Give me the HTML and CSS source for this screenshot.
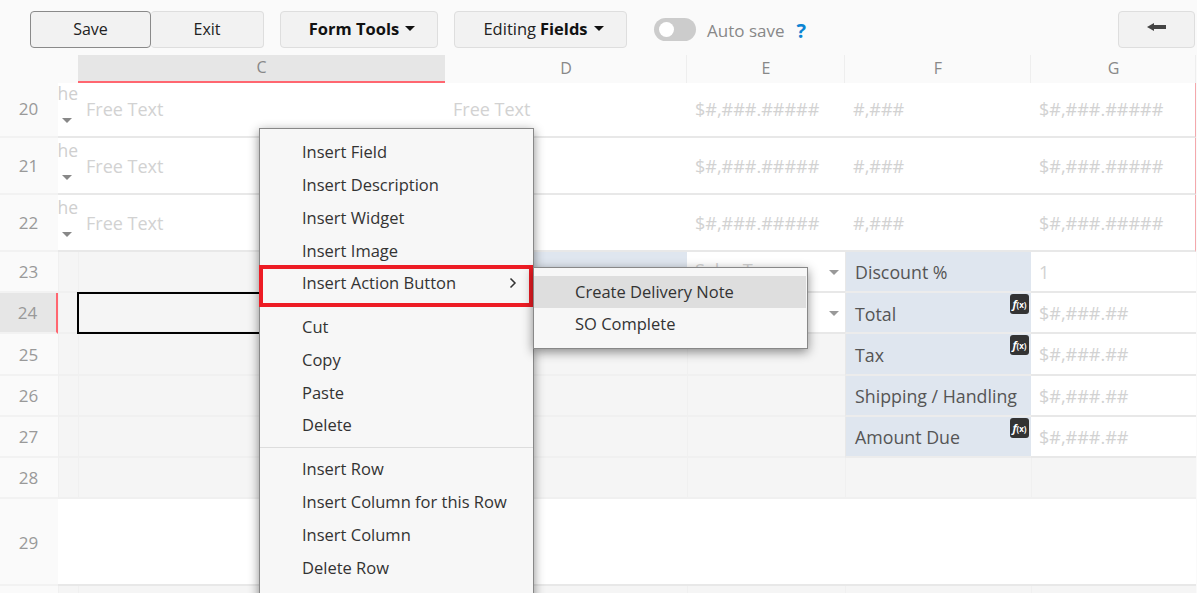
FILE: index.html
```html
<!DOCTYPE html>
<html lang="en">
<head>
<meta charset="utf-8">
<title>Form editor</title>
<link rel="stylesheet" href="styles.css">
</head>
<body>
<div class="page">
  <header class="toolbar">
    <div class="btn-group">
      <button class="btn btn-save">Save</button>
      <button class="btn btn-exit">Exit</button>
    </div>
    <button class="btn btn-tools"><b>Form Tools</b><span class="caret"></span></button>
    <button class="btn btn-edit">Editing <b>Fields</b><span class="caret"></span></button>
    <div class="autosave">
      <span class="toggle"><span class="knob"></span></span>
      <span class="auto-label">Auto save</span>
      <span class="help">?</span>
    </div>
    <button class="btn btn-back" aria-label="Back">
      <svg width="20" height="10" viewBox="0 0 20 10"><path d="M0 5 L7 1 V3 H19 V7 H7 V9 Z" fill="#444"/></svg>
    </button>
  </header>

  <main class="sheet">
    <div class="colhead corner"></div>
    <div class="colhead corner"></div>
    <div class="colhead col-active">C</div>
    <div class="colhead">D</div>
    <div class="colhead">E</div>
    <div class="colhead">F</div>
    <div class="colhead">G</div>

    <div class="rowhead row-first">20</div>
    <div class="cell clip"><span class="clip-text">he</span><span class="mini-caret"></span></div>
    <div class="cell ph row-first">Free Text</div>
    <div class="cell ph row-first">Free Text</div>
    <div class="cell ph row-first">$#,###.#####</div>
    <div class="cell ph row-first">#,###</div>
    <div class="cell ph edge row-first">$#,###.#####</div>

    <div class="rowhead">21</div>
    <div class="cell clip"><span class="clip-text">he</span><span class="mini-caret"></span></div>
    <div class="cell ph">Free Text</div>
    <div class="cell ph">Free Text</div>
    <div class="cell ph">$#,###.#####</div>
    <div class="cell ph">#,###</div>
    <div class="cell ph edge">$#,###.#####</div>

    <div class="rowhead">22</div>
    <div class="cell clip"><span class="clip-text">he</span><span class="mini-caret"></span></div>
    <div class="cell ph">Free Text</div>
    <div class="cell ph">Free Text</div>
    <div class="cell ph">$#,###.#####</div>
    <div class="cell ph">#,###</div>
    <div class="cell ph edge">$#,###.#####</div>

    <div class="rowhead">23</div>
    <div class="cell grey"></div>
    <div class="cell grey"></div>
    <div class="cell label"></div>
    <div class="cell ph select">Sales Tax<span class="sel-caret"></span></div>
    <div class="cell label">Discount %</div>
    <div class="cell ph">1</div>

    <div class="rowhead rowhead-active">24</div>
    <div class="cell grey"></div>
    <div class="cell grey selected"></div>
    <div class="cell label"></div>
    <div class="cell ph select"><span class="sel-caret"></span></div>
    <div class="cell label fx">Total<span class="fx-badge">f<small>(x)</small></span></div>
    <div class="cell ph">$#,###.##</div>

    <div class="rowhead">25</div>
    <div class="cell grey"></div>
    <div class="cell grey"></div>
    <div class="cell grey"></div>
    <div class="cell grey"></div>
    <div class="cell label fx">Tax<span class="fx-badge">f<small>(x)</small></span></div>
    <div class="cell ph">$#,###.##</div>

    <div class="rowhead">26</div>
    <div class="cell grey"></div>
    <div class="cell grey"></div>
    <div class="cell grey"></div>
    <div class="cell grey"></div>
    <div class="cell label">Shipping / Handling</div>
    <div class="cell ph">$#,###.##</div>

    <div class="rowhead">27</div>
    <div class="cell grey"></div>
    <div class="cell grey"></div>
    <div class="cell grey"></div>
    <div class="cell grey"></div>
    <div class="cell label fx fx-last">Amount Due<span class="fx-badge">f<small>(x)</small></span></div>
    <div class="cell ph">$#,###.##</div>

    <div class="rowhead">28</div>
    <div class="cell grey"></div>
    <div class="cell grey"></div>
    <div class="cell grey"></div>
    <div class="cell grey"></div>
    <div class="cell grey"></div>
    <div class="cell grey"></div>

    <div class="rowhead row-tall">29</div>
    <div class="cell span-all"></div>

    <div class="rowhead"></div>
    <div class="cell grey"></div>
    <div class="cell grey"></div>
    <div class="cell grey"></div>
    <div class="cell grey"></div>
    <div class="cell grey"></div>
    <div class="cell grey"></div>
  </main>

  <nav class="menu">
    <div class="item">Insert Field</div>
    <div class="item">Insert Description</div>
    <div class="item">Insert Widget</div>
    <div class="item">Insert Image</div>
    <div class="item item-boxed">Insert Action Button
      <svg class="chev" width="8" height="12" viewBox="0 0 8 12"><path d="M1.5 1.5 L6 6 L1.5 10.5" fill="none" stroke="#333" stroke-width="1.5"/></svg>
    </div>
    <div class="item">Cut</div>
    <div class="item">Copy</div>
    <div class="item">Paste</div>
    <div class="item item-short">Delete</div>
    <div class="sep"></div>
    <div class="item">Insert Row</div>
    <div class="item">Insert Column for this Row</div>
    <div class="item">Insert Column</div>
    <div class="item">Delete Row</div>
  </nav>

  <nav class="submenu">
    <div class="subitem subitem-active">Create Delivery Note</div>
    <div class="subitem">SO Complete</div>
  </nav>
</div>
</body>
</html>
```
FILE: styles.css
```css
* { box-sizing: border-box; }
html, body { margin: 0; height: 100%; }
body {
  background: #fafafa;
  font-family: "Open Sans", "Noto Sans", sans-serif;
  font-size: 16.5px;
  color: #333;
}
.page {
  position: relative;
  width: 1197px;
  height: 593px;
  overflow: hidden;
  background: #fafafa;
}

/* toolbar */
.toolbar {
  display: flex;
  align-items: flex-start;
  height: 55px;
  padding: 11px 2px 0 30px;
}
.btn-group { display: flex; margin-right: 16px; }
.btn {
  height: 37px;
  padding: 0 0 2px;
  border: 1px solid #dedede;
  border-radius: 4px;
  background: #f2f2f2;
  font: inherit;
  color: #222;
  display: flex;
  align-items: center;
  justify-content: center;
}
.btn b { color: #111; }
.btn-save { width: 121px; border-color: #8a8a8a; font-size: 16px; }
.btn-exit { width: 113px; border-left: 0; font-size: 16px; }
.btn-tools { width: 158px; margin-right: 16px; padding-left: 6px; }
.btn-edit { width: 173px; margin-right: 27px; padding-left: 6px; }
.btn-edit b { margin-left: 4px; }
.caret {
  width: 0;
  height: 0;
  margin-left: 6px;
  border-left: 5px solid transparent;
  border-right: 5px solid transparent;
  border-top: 5px solid #111;
}
.autosave { display: flex; align-items: center; height: 37px; }
.toggle {
  width: 42px;
  height: 23px;
  border-radius: 12px;
  background: #ccc;
  padding: 4px 5px;
  margin-right: 11px;
}
.knob { display: block; width: 15px; height: 15px; border-radius: 50%; background: #fff; }
.auto-label { color: #888; font-size: 17px; margin-top: 2px; }
.help { margin: 2px 0 0 12px; color: #0b84d3; font-weight: 700; font-size: 20px; line-height: 24px; }
.btn-back { width: 77px; margin-left: auto; }
.btn-back svg { margin-top: -3px; }

/* sheet */
.sheet {
  display: grid;
  grid-template-columns: 58px 20px 367px 242px 158px 186px 165px;
  grid-template-rows: 28px 55px 57px 57px 41px 41px 42px 41px 41px 41px 87px 30px;
  width: 1196px;
}
.colhead {
  display: flex;
  align-items: center;
  justify-content: center;
  color: #888;
  font-size: 16px;
  border-right: 1px solid #eee;
  padding: 0 0 2px 1px;
}
.corner { border-right: 0; }
.col-active {
  background: #e6e6e6;
  border-right: 0;
  border-bottom: 2px solid #ff6670;
  padding: 0 0 3px;
}
.rowhead {
  display: flex;
  align-items: center;
  justify-content: center;
  color: #999;
  font-size: 17px;
  border-bottom: 2px solid #f2f2f2;
  background: #fafafa;
  padding-right: 1px;
}
.rowhead-active {
  background: #e6e6e6;
  border-right: 2px solid #ff6670;
}
.row-first { padding-bottom: 2px; }
.row-tall { padding-top: 1px; }
.cell {
  display: flex;
  align-items: center;
  padding-left: 8px;
  padding-right: 8px;
  min-width: 0;
  background: #fff;
  border-bottom: 2px solid #e8e8e8;
  font-size: 18px;
}
.ph { color: #d2d2d2; }
.edge { border-right: 1px solid #f4a8ac; }
.grey {
  background: #f5f5f5;
  border-bottom: 2px solid #f0f0f0;
  border-left: 1px solid #f0f0f0;
}
.label {
  background: #dfe6ef;
  color: #555;
  border-left: 1px solid #e8e8e8;
  border-bottom: 2px solid #ececec;
  position: relative;
  padding-top: 1px;
  padding-left: 9px;
  font-size: 17.8px;
}
.fx { padding-top: 2px; }
.fx-last { padding-top: 0; }
.clip {
  flex-direction: column;
  justify-content: flex-end;
  align-items: flex-end;
  padding: 0 0 13px;
  color: #cfcfcf;
  font-size: 17.5px;
}
.clip-text { line-height: 20px; }
.mini-caret {
  align-self: flex-start;
  width: 0;
  height: 0;
  margin: 15px 0 0 4px;
  border-left: 5px solid transparent;
  border-right: 5px solid transparent;
  border-top: 5px solid #888;
}
.select { position: relative; overflow: hidden; padding-bottom: 4px; }
.sel-caret {
  position: absolute;
  right: 6px;
  top: 18px;
  width: 0;
  height: 0;
  border-left: 5px solid transparent;
  border-right: 5px solid transparent;
  border-top: 5px solid #999;
}
.selected { margin-bottom: 1px; outline: 2px solid #000; outline-offset: -1px; z-index: 1; }
.span-all { grid-column: 2 / -1; }
.fx-badge {
  position: absolute;
  right: 2px;
  top: 1px;
  width: 19px;
  height: 20px;
  border-radius: 3px;
  background: #333;
  color: #fff;
  font-size: 11px;
  font-weight: 700;
  font-style: italic;
  line-height: 19px;
  text-align: center;
}
.fx-badge small { font-size: 8px; font-style: normal; }

/* context menu */
.menu {
  position: absolute;
  left: 259px;
  top: 128px;
  width: 275px;
  height: 500px;
  padding-top: 7px;
  background: #f7f7f7;
  border: 1px solid #888;
  box-shadow: 0 3px 10px rgba(0, 0, 0, .45);
  z-index: 5;
}
.item {
  height: 33px;
  padding-left: 42px;
  line-height: 32px;
  color: #333;
  white-space: nowrap;
}
.item-short { height: 32px; line-height: 30px; }
.item-boxed {
  position: relative;
  height: 42px;
  width: 274px;
  margin: -3px 0 4px -1px;
  padding-left: 39px;
  border: 4px solid #ed1c24;
  line-height: 28px;
}
.chev { position: absolute; right: 12px; top: 8px; }
.sep { height: 1px; margin: 5px 0; background: #ddd; }

.submenu {
  position: absolute;
  left: 533px;
  top: 267px;
  width: 275px;
  height: 82px;
  padding: 8px 1px 0 0;
  background: #f7f7f7;
  border: 1px solid #888;
  box-shadow: 0 3px 10px rgba(0, 0, 0, .45);
  z-index: 6;
}
.subitem {
  height: 32px;
  padding-left: 41px;
  line-height: 32px;
  color: #333;
}
.subitem-active { background: #dedede; }
```
